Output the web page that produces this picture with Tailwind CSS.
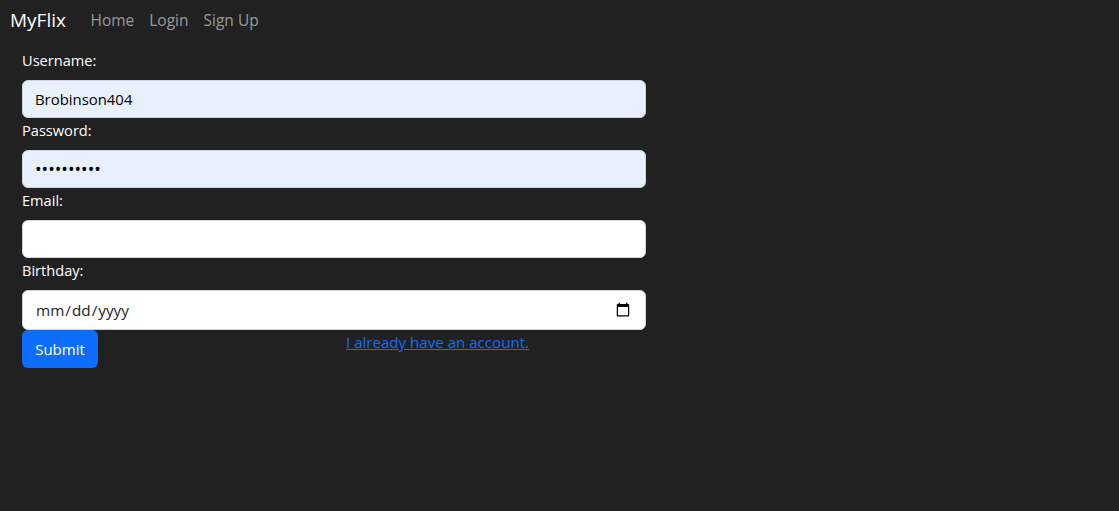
<!DOCTYPE html>
<html lang="en">
<head>
<meta charset="utf-8">
<title>MyFlix</title>
<script src="https://cdn.jsdelivr.net/npm/@tailwindcss/browser@4"></script>
</head>
<body class="h-[511px] overflow-hidden bg-[#212121] font-['Open_Sans','Noto_Sans',sans-serif] text-[15px] leading-6 text-white">
<nav class="flex h-10 items-center px-2.5">
  <a href="#" class="mr-[24.5px] text-[19px] text-white">MyFlix</a>
  <div class="flex gap-[15px] text-[15.5px] text-[rgba(255,255,255,0.55)]">
    <a href="#">Home</a>
    <a href="#">Login</a>
    <a href="#">Sign Up</a>
  </div>
</nav>
<main class="ml-[22px] mt-2 w-[624px]">
  <form>
    <label class="mb-2 block h-6 text-[14.6px]" for="u">Username:</label>
    <input id="u" type="text" value="Brobinson404" class="block h-[38px] w-full rounded-md border border-[#ced4da] bg-[#e8f0fe] px-3 text-[14.9px] text-black outline-none">
    <label class="mb-2 block h-6 text-[14.6px]" for="p">Password:</label>
    <input id="p" type="password" value="1234567890" class="block h-[38px] w-full rounded-md border border-[#ced4da] bg-[#e8f0fe] px-3 text-[17.5px] text-black outline-none">
    <label class="mb-2 block h-6 text-[14.6px]" for="e">Email:</label>
    <input id="e" type="email" class="block h-[38px] w-full rounded-md border border-[#ced4da] bg-white px-3 text-black outline-none">
    <label class="mb-2 block h-6 text-[14.6px]" for="b">Birthday:</label>
    <input id="b" type="date" class="block h-10 w-full rounded-md border border-[#ced4da] bg-white pl-3 pr-[12.5px] text-[15.3px] text-[#212529] outline-none">
    <div class="flex items-start">
      <button type="button" class="h-[38px] w-[76px] rounded-md bg-[#0d6efd] text-white">Submit</button>
      <a href="#" class="ml-[248px] text-[15.1px] text-[#0d6efd] underline">I already have an account.</a>
    </div>
  </form>
</main>
</body>
</html>
